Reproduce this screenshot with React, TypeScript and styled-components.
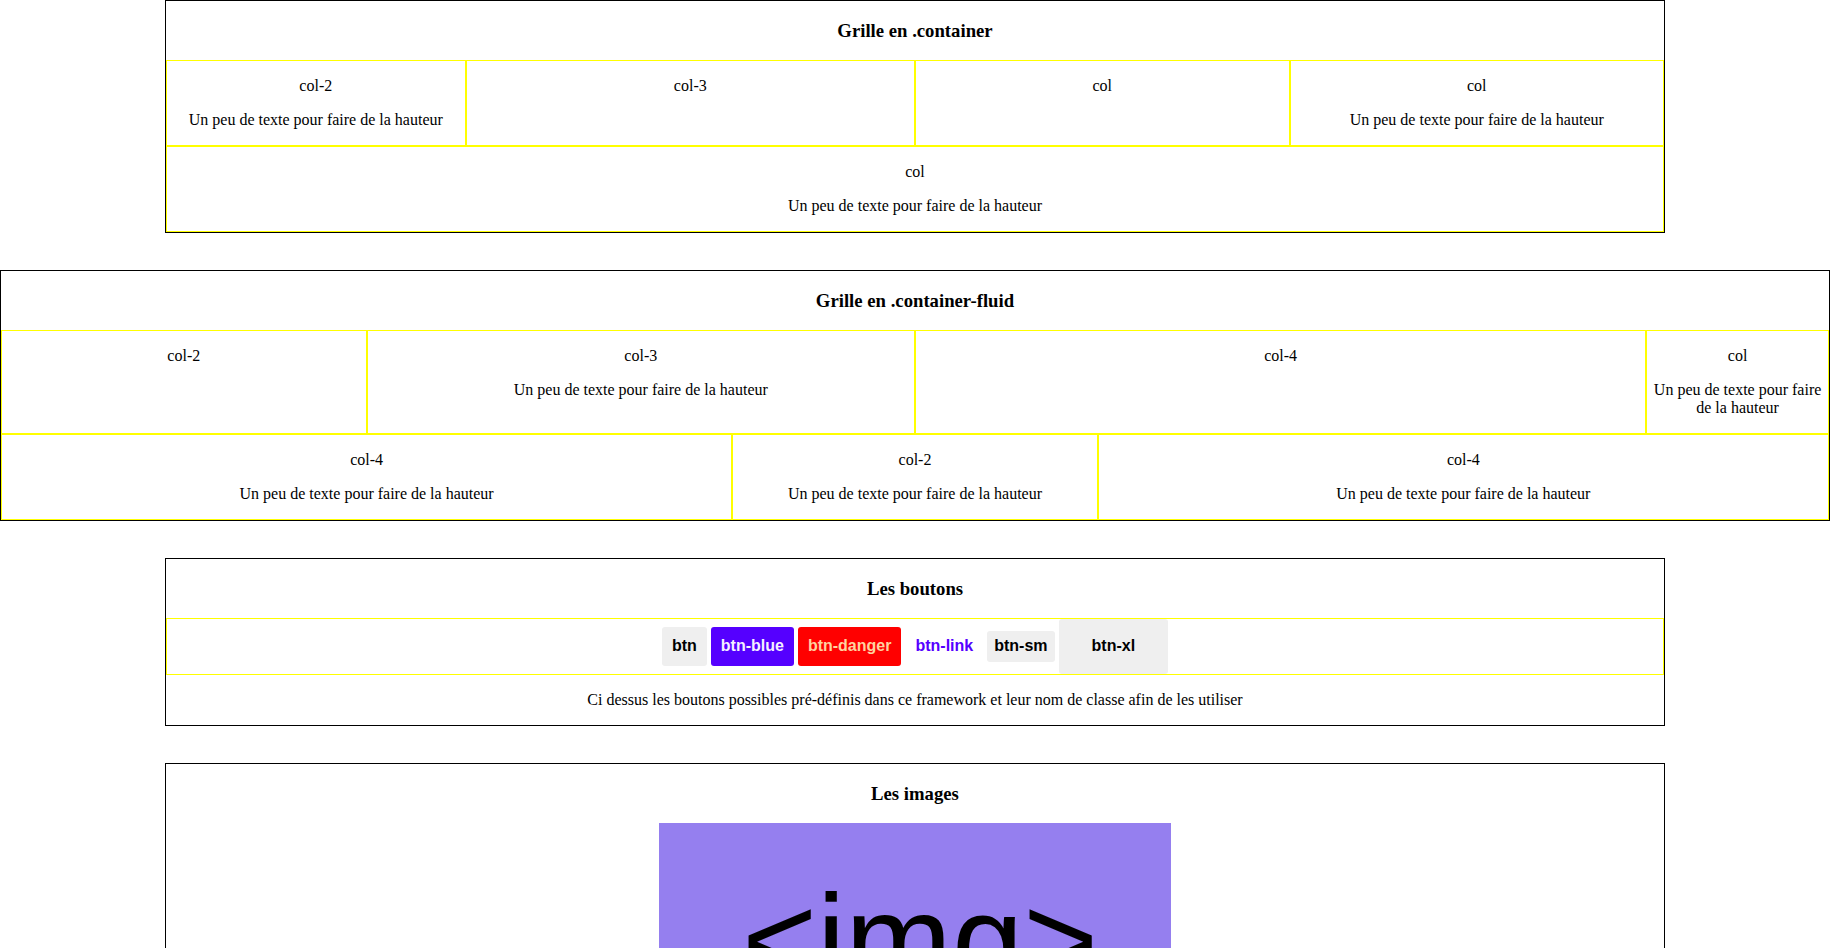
import React from "react";
import styled, { createGlobalStyle, css } from "styled-components";

const GlobalStyle = createGlobalStyle`
  html, body {
    margin: 0;
    padding: 0;
    background: #fff;
  }
  body {
    padding-right: 3px;
    font-family: "Liberation Serif", "Times New Roman", serif;
    font-size: 16px;
    color: #000;
  }
`;

const Section = styled.section<{ $fluid?: boolean }>`
  box-sizing: border-box;
  border: 1px solid #000;
  text-align: center;
  margin: 0 auto 37px;
  width: ${(p) => (p.$fluid ? "auto" : "1500px")};
`;

const Title = styled.h3`
  margin: 18.72px 0;
  font-size: 18.72px;
  font-weight: bold;
  line-height: 21.5px;
`;

const Row = styled.div`
  display: flex;
`;

const Col = styled.div<{ $span?: number }>`
  box-sizing: border-box;
  border: 1px solid #ffff00;
  min-width: 0;
  flex: ${(p) => (p.$span ? `0 0 ${p.$span * 10}%` : "1 1 0")};
`;

const Text = styled.p`
  margin: 16px 0;
  line-height: 18px;
`;

const ButtonBar = styled.div`
  border: 1px solid #ffff00;
  display: flex;
  justify-content: center;
  align-items: center;
  gap: 4px;
  min-height: 55px;
`;

type Variant = "default" | "blue" | "danger" | "link";
type Size = "md" | "sm" | "xl";

const variants: Record<Variant, ReturnType<typeof css>> = {
  default: css`
    background: #efefef;
    color: #000;
  `,
  blue: css`
    background: #5500ff;
    color: #f4f0ff;
  `,
  danger: css`
    background: #ff0000;
    color: #ffd2a0;
  `,
  link: css`
    background: transparent;
    color: #5500ff;
  `,
};

const sizes: Record<Size, string> = {
  md: "10px 10px",
  sm: "6.3px 7px",
  xl: "18.3px 33px",
};

const Btn = styled.button<{ $variant?: Variant; $size?: Size }>`
  font-family: "Liberation Sans", Arial, sans-serif;
  font-weight: bold;
  font-size: 16px;
  line-height: 18.4px;
  border: none;
  border-radius: 3px;
  margin: 0;
  cursor: pointer;
  padding: ${(p) => sizes[p.$size ?? "md"]};
  ${(p) => variants[p.$variant ?? "default"]}
`;

const Picture = styled.svg`
  display: block;
  margin: 1px auto 0;
`;

const FILL = "Un peu de texte pour faire de la hauteur";

type Cell = { span?: number; label: string; text?: boolean };

const containerRows: Cell[][] = [
  [
    { span: 2, label: "col-2", text: true },
    { span: 3, label: "col-3" },
    { label: "col" },
    { label: "col", text: true },
  ],
  [{ label: "col", text: true }],
];

const fluidRows: Cell[][] = [
  [
    { span: 2, label: "col-2" },
    { span: 3, label: "col-3", text: true },
    { span: 4, label: "col-4" },
    { label: "col", text: true },
  ],
  [
    { span: 4, label: "col-4", text: true },
    { span: 2, label: "col-2", text: true },
    { span: 4, label: "col-4", text: true },
  ],
];

const Grid = ({ rows }: { rows: Cell[][] }) => (
  <>
    {rows.map((row, i) => (
      <Row key={i}>
        {row.map((c, j) => (
          <Col key={j} $span={c.span}>
            <Text>{c.label}</Text>
            {c.text && <Text>{FILL}</Text>}
          </Col>
        ))}
      </Row>
    ))}
  </>
);

export default function App() {
  return (
    <>
      <GlobalStyle />
      <Section>
        <Title>Grille en .container</Title>
        <Grid rows={containerRows} />
      </Section>
      <Section $fluid>
        <Title>Grille en .container-fluid</Title>
        <Grid rows={fluidRows} />
      </Section>
      <Section>
        <Title>Les boutons</Title>
        <ButtonBar>
          <Btn>btn</Btn>
          <Btn $variant="blue">btn-blue</Btn>
          <Btn $variant="danger">btn-danger</Btn>
          <Btn $variant="link">btn-link</Btn>
          <Btn $size="sm">btn-sm</Btn>
          <Btn $size="xl">btn-xl</Btn>
        </ButtonBar>
        <Text>
          Ci dessus les boutons possibles pré-définis dans ce framework et leur nom de classe afin de les utiliser
        </Text>
      </Section>
      <Section>
        <Title>Les images</Title>
        <Picture width="512" height="256" viewBox="0 0 512 256">
          <rect width="512" height="256" fill="#957fef" />
          <text
            x="261"
            y="161"
            textAnchor="middle"
            fontFamily="Liberation Sans, Arial, sans-serif"
            fontSize="128"
            fill="#000"
          >
            {"<img>"}
          </text>
        </Picture>
      </Section>
    </>
  );
}
